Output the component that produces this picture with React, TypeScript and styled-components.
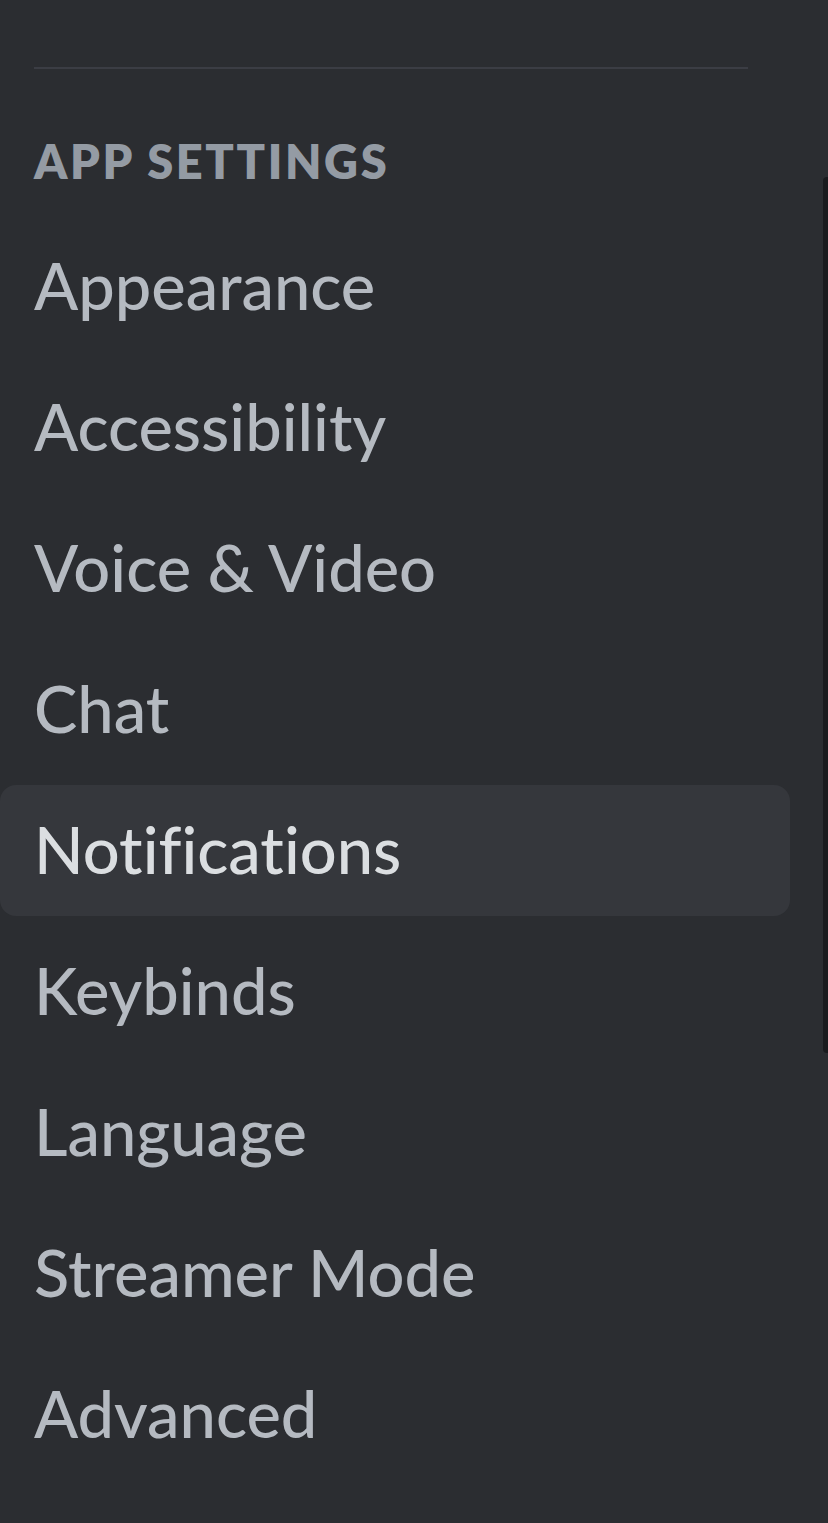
import React, { FunctionComponent } from 'react';
import styled, { createGlobalStyle } from 'styled-components';

const GlobalStyle = createGlobalStyle`
    html, body {
        margin: 0;
        padding: 0;
        background: #2b2d31;
    }

    body {
        font-family: Lato, 'Liberation Sans', sans-serif;
        font-variant-ligatures: none;
        -webkit-font-smoothing: antialiased;
    }
`;

const SidebarContainer = styled.nav`
    position: relative;
    width: 828px;
    min-height: 1523px;
    box-sizing: border-box;
    padding: 67px 38px 0 0;
    background: #2b2d31;
    overflow: hidden;
`;

const Divider = styled.div`
    height: 2px;
    margin: 0 42px 0 34px;
    background: #3b3d44;
`;

const SectionHeader = styled.h2`
    margin: 60px 0 28px;
    padding: 0 34px;
    font-size: 47px;
    line-height: 64px;
    font-weight: 800;
    letter-spacing: 2.6px;
    text-transform: uppercase;
    color: #949ba4;
`;

const ItemList = styled.div`
    display: flex;
    flex-direction: column;
    gap: 10px;
`;

const Item = styled.div<{ $selected?: boolean }>`
    height: 131px;
    box-sizing: border-box;
    padding: 25px 34px 0;
    border-radius: 16px;
    font-size: 65px;
    line-height: 78px;
    font-weight: 500;
    white-space: nowrap;
    color: ${(p) => (p.$selected ? '#dbdee1' : '#b5bac1')};
    background: ${(p) => (p.$selected ? '#35373c' : 'transparent')};
`;

const ScrollThumb = styled.div`
    position: absolute;
    top: 177px;
    right: 0;
    width: 5px;
    height: 876px;
    border-radius: 4px 0 0 4px;
    background: #1a1b1e;
`;

const settings = [
    'Appearance',
    'Accessibility',
    'Voice & Video',
    'Chat',
    'Notifications',
    'Keybinds',
    'Language',
    'Streamer Mode',
    'Advanced',
];

const App: FunctionComponent = () => {
    const selected = 'Notifications';

    return (
        <>
            <GlobalStyle />
            <SidebarContainer>
                <Divider />
                <SectionHeader>App Settings</SectionHeader>
                <ItemList>
                    {settings.map((label) => (
                        <Item key={label} $selected={label === selected}>
                            {label}
                        </Item>
                    ))}
                </ItemList>
                <ScrollThumb />
            </SidebarContainer>
        </>
    );
};

export default App;
